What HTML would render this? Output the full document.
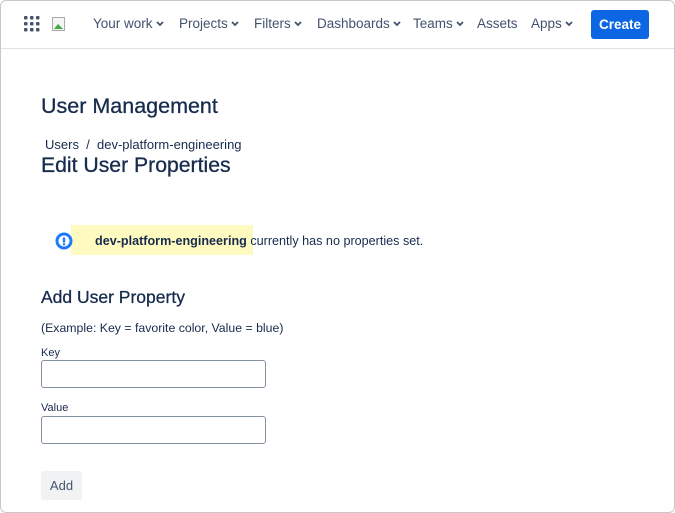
<!DOCTYPE html>
<html><head><style>
*{box-sizing:border-box}
body{margin:0;width:675px;height:513px;overflow:hidden;background:#fff;font-family:"Liberation Sans",Arial,sans-serif;color:#172b4d}
.frame{position:absolute;left:0;top:0;width:675px;height:513px;border:1px solid #c8c8c8;border-radius:6px}
.hdr{position:absolute;left:1px;top:1px;right:1px;height:48px;border-bottom:1px solid #dfe1e6}
.nav{position:absolute;top:16px;font-size:13.5px;color:#42526e}
.nav span{position:absolute;white-space:nowrap}
.nav svg{vertical-align:middle;margin-left:3px}
.create{position:absolute;left:591px;top:10px;width:58px;height:29px;background:#0c66e4;color:#fff;border-radius:3px;font-size:13.5px;font-weight:bold;text-align:center;line-height:29px}
.t{position:absolute;white-space:nowrap}
input{position:absolute;width:225px;height:28px;border:1px solid #8590a2;border-radius:3px;background:#fff}
</style></head><body>
<div class="frame"></div>
<div class="hdr"></div>
<svg style="position:absolute;left:24px;top:16px" width="16" height="16">
<g fill="#44546f">
<rect x="0" y="0" width="3.5" height="3.5" rx="1"/><rect x="6" y="0" width="3.5" height="3.5" rx="1"/><rect x="12" y="0" width="3.5" height="3.5" rx="1"/>
<rect x="0" y="6" width="3.5" height="3.5" rx="1"/><rect x="6" y="6" width="3.5" height="3.5" rx="1"/><rect x="12" y="6" width="3.5" height="3.5" rx="1"/>
<rect x="0" y="12" width="3.5" height="3.5" rx="1"/><rect x="6" y="12" width="3.5" height="3.5" rx="1"/><rect x="12" y="12" width="3.5" height="3.5" rx="1"/></g></svg>
<svg style="position:absolute;left:52px;top:17px" width="14" height="15"><rect x="0.5" y="0.5" width="12" height="13" fill="#f4f4f4" stroke="#aaa"/><path d="M2 12 L6 7 L11 12Z" fill="#4a4"/></svg>
<div class="nav">
<span style="left:93px">Your work<svg width="8" height="6"><path d="M1 1L4 4L7 1" stroke="#42526e" stroke-width="1.8" fill="none"/></svg></span>
<span style="left:179px">Projects<svg width="8" height="6"><path d="M1 1L4 4L7 1" stroke="#42526e" stroke-width="1.8" fill="none"/></svg></span>
<span style="left:254px">Filters<svg width="8" height="6"><path d="M1 1L4 4L7 1" stroke="#42526e" stroke-width="1.8" fill="none"/></svg></span>
<span style="left:317px">Dashboards<svg width="8" height="6"><path d="M1 1L4 4L7 1" stroke="#42526e" stroke-width="1.8" fill="none"/></svg></span>
<span style="left:413px">Teams<svg width="8" height="6"><path d="M1 1L4 4L7 1" stroke="#42526e" stroke-width="1.8" fill="none"/></svg></span>
<span style="left:477px">Assets</span>
<span style="left:531px">Apps<svg width="8" height="6"><path d="M1 1L4 4L7 1" stroke="#42526e" stroke-width="1.8" fill="none"/></svg></span>
</div>
<div class="create">Create</div>
<div class="t" style="left:41px;top:94px;font-size:21.5px;-webkit-text-stroke:0.3px #172b4d">User Management</div>
<div class="t" style="left:45px;top:137px;font-size:13px;color:#172b4d">Users &nbsp;/ &nbsp;dev-platform-engineering</div>
<div class="t" style="left:41px;top:154px;font-size:21.2px;-webkit-text-stroke:0.3px #172b4d">Edit User Properties</div>
<div style="position:absolute;left:71px;top:225px;width:182px;height:30px;background:#fffac0"></div>
<svg style="position:absolute;left:55px;top:232px" width="18" height="18"><circle cx="9" cy="9" r="8.5" fill="#1d7afc"/><circle cx="9" cy="9" r="5.5" fill="#fff"/><rect x="7.8" y="5.5" width="2.4" height="5" fill="#1d7afc"/><circle cx="9" cy="12.3" r="1.2" fill="#1d7afc"/></svg>
<div class="t" style="left:95px;top:234px;font-size:12.6px"><b>dev-platform-engineering</b> currently has no properties set.</div>
<div class="t" style="left:41px;top:287px;font-size:17.5px;-webkit-text-stroke:0.3px #172b4d">Add User Property</div>
<div class="t" style="left:41px;top:321px;font-size:12.3px">(Example: Key = favorite color, Value = blue)</div>
<div class="t" style="left:41px;top:347px;font-size:11px">Key</div>
<input style="left:41px;top:360px">
<div class="t" style="left:41px;top:402px;font-size:11px">Value</div>
<input style="left:41px;top:416px">
<div style="position:absolute;left:41px;top:471px;width:41px;height:29px;background:#f1f2f4;border-radius:3px;font-size:13px;text-align:center;line-height:29px;color:#44546f">Add</div>
</body></html>
